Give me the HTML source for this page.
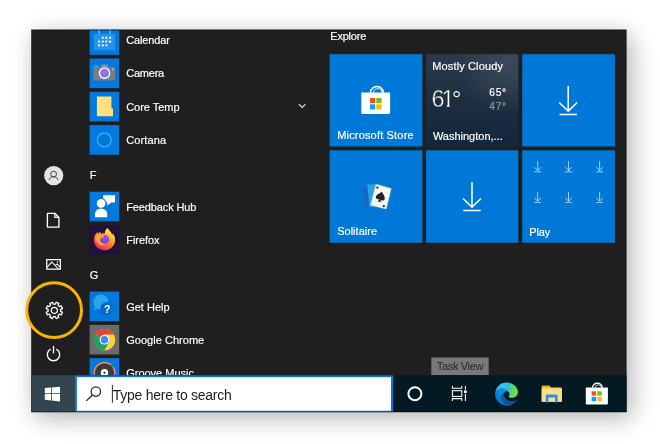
<!DOCTYPE html>
<html lang="en">
<head>
<meta charset="utf-8">
<title>Start menu - Settings</title>
<style>
html,body{margin:0;padding:0;background:#fff;}
body{width:660px;height:444px;overflow:hidden;position:relative;font-family:"Liberation Sans",sans-serif;}
#shadow{position:absolute;left:33px;top:31px;width:592px;height:379px;background:#1f1f1f;box-shadow:2px 4px 22px 1.5px rgba(0,0,0,0.24),9px 9px 26px 1.5px rgba(0,0,0,0.09);}
svg#ui{position:absolute;left:0;top:0;width:660px;height:444px;will-change:transform;}
svg text{font-family:"Liberation Sans",sans-serif;}
.lt{font-size:11px;fill:#fff;stroke:#fff;stroke-width:0.18px;}
</style>
</head>
<body>
<div id="shadow"></div>
<svg id="ui" width="660" height="444" viewBox="0 0 660 444">
<defs>
  <clipPath id="oneclip"><rect x="428" y="84" width="42" height="20.8"/><rect x="428" y="104" width="14.6" height="5"/><rect x="446.8" y="104" width="2.7" height="3.2"/></clipPath>
  <clipPath id="menuclip"><rect x="31.2" y="29.5" width="595.4" height="382.6"/></clipPath>
  <clipPath id="listclip"><rect x="31.2" y="29.5" width="595.4" height="345.7"/></clipPath>
  <linearGradient id="ghd" x1="0" y1="0" x2="1" y2="0.3"><stop offset="0" stop-color="#0a5fbc"/><stop offset="0.6" stop-color="#0a6ccb"/><stop offset="1" stop-color="#0975d3"/></linearGradient>
  <linearGradient id="camlens" x1="0" y1="0" x2="1" y2="1">
    <stop offset="0" stop-color="#d55fe0"/><stop offset="1" stop-color="#4a86f5"/>
  </linearGradient>
  <linearGradient id="wx" x1="0" y1="0" x2="0" y2="1">
    <stop offset="0" stop-color="#2a3a4b"/><stop offset="0.5" stop-color="#1e2e41"/><stop offset="1" stop-color="#13263a"/>
  </linearGradient>
  <radialGradient id="wxcloud" cx="0.9" cy="0.12" r="0.55">
    <stop offset="0" stop-color="#5a6675" stop-opacity="0.4"/><stop offset="1" stop-color="#5a6675" stop-opacity="0"/>
  </radialGradient>
  <g id="dl">
    <path d="M0 -14.3V10.6M-9 2.2L0 10.8L9 2.2M-8.7 14.2H8.7" fill="none" stroke="#fff" stroke-width="1.5"/>
  </g>
  <g id="dls">
    <path d="M0 -5V4.2M-3.3 1L0 4.3L3.3 1M-3.4 5.6H3.4" fill="none" stroke="#fff" stroke-opacity="0.72" stroke-width="0.9"/>
  </g>
</defs>

<!-- menu background -->
<rect x="31.2" y="29.5" width="595.4" height="382.6" fill="#1f1f1f"/>

<g clip-path="url(#listclip)">
<!-- ===== app list icon tiles ===== -->
<g id="apptiles">
  <rect x="89.6" y="25.2" width="29.6" height="29.6" fill="#0479dd"/>
  <rect x="89.6" y="58.5" width="29.6" height="29.6" fill="#0479dd"/>
  <rect x="89.6" y="91.8" width="29.6" height="29.6" fill="#0479dd"/>
  <rect x="89.6" y="125.1" width="29.6" height="29.6" fill="#0479dd"/>
  <rect x="89.6" y="191.7" width="29.6" height="29.6" fill="#0479dd"/>
  <rect x="89.6" y="225" width="29.6" height="29.6" fill="#20123a"/>
  <rect x="89.6" y="291.6" width="29.6" height="29.6" fill="#0479dd"/>
  <rect x="89.6" y="324.9" width="29.6" height="29.6" fill="#6b6b6b"/>
  <rect x="89.6" y="358.2" width="29.6" height="29.6" fill="#0479dd"/>
</g>

<!-- Calendar -->
<g>
  <rect x="98.2" y="28" width="1.7" height="6.3" fill="#4db4f8"/>
  <rect x="109.2" y="28" width="1.7" height="6.3" fill="#4db4f8"/>
  <rect x="93.8" y="33.8" width="21.3" height="16.4" fill="#2394ea"/>
  <g fill="#fff">
    <rect x="101.7" y="36.8" width="2" height="1.9"/><rect x="105.4" y="36.8" width="2" height="1.9"/><rect x="109.1" y="36.8" width="2" height="1.9"/>
    <rect x="98" y="40.6" width="2" height="1.9"/><rect x="101.7" y="40.6" width="2" height="1.9"/><rect x="105.4" y="40.6" width="2" height="1.9"/><rect x="109.1" y="40.6" width="2" height="1.9"/>
    <rect x="98" y="44.4" width="2" height="1.9"/><rect x="101.7" y="44.4" width="2" height="1.9"/><rect x="105.4" y="44.4" width="2" height="1.9"/>
  </g>
</g>
<!-- Camera -->
<g>
  <rect x="94.6" y="65.4" width="3.6" height="1.8" fill="#3fa9f5"/>
  <path d="M100.6 67.2L101.6 64.4H107.6L108.6 67.2Z" fill="#8b8f97"/>
  <rect x="93.2" y="66.9" width="21.8" height="13.6" rx="0.8" fill="#787d86"/>
  <circle cx="104.5" cy="73.1" r="5.9" fill="#fff"/>
  <circle cx="104.5" cy="73.1" r="4.5" fill="url(#camlens)"/>
  <circle cx="112.7" cy="69.4" r="0.75" fill="#e8e8e8"/>
</g>
<!-- Core Temp -->
<path d="M96.9 96.5H111.4V107.6L113 109.2V116.2H96.9Z" fill="#ffe07c"/>
<path d="M111.4 107.6L113 109.2H111.4Z" fill="#f3c64e"/>
<!-- Cortana -->
<circle cx="104.3" cy="139.8" r="6.9" fill="#0674d2" stroke="#1db2f8" stroke-width="1.5"/>
<!-- Feedback Hub -->
<g>
  <path d="M103.2 195.2H115V202.5H111.1L107.3 205.7V202.5H103.2Z" fill="#fff"/>
  <circle cx="101.1" cy="203.4" r="5.5" fill="#0479dd"/>
  <circle cx="101.1" cy="203.4" r="4.3" fill="#fff"/>
  <path d="M95 217.3V214A6.1 5.5 0 0 1 107.2 214V217.3Z" fill="#fff"/>
</g>
<!-- Firefox -->
<g>
  <defs>
    <linearGradient id="ffbody" x1="0.85" y1="0.1" x2="0.25" y2="1">
      <stop offset="0" stop-color="#fff44f"/><stop offset="0.25" stop-color="#ffc22e"/><stop offset="0.55" stop-color="#ff782a"/><stop offset="0.82" stop-color="#ff3d55"/><stop offset="1" stop-color="#f5236f"/>
    </linearGradient>
    <linearGradient id="ffglobe" x1="0.5" y1="0" x2="0.4" y2="1">
      <stop offset="0" stop-color="#b83df2"/><stop offset="1" stop-color="#5b4fe8"/>
    </linearGradient>
    <linearGradient id="fffox" x1="0" y1="0" x2="1" y2="1">
      <stop offset="0" stop-color="#ff9a2a"/><stop offset="1" stop-color="#ffb52e"/>
    </linearGradient>
  </defs>
  <path d="M107.3 228C105.6 229.4 104.6 231.6 104.9 233.6C103.4 233 101.9 233.4 100.9 234.2C100.5 233.3 100.5 232.5 100.7 231.8C99.6 232.2 98.8 233 98.3 233.8C97.9 233.2 97.8 232.6 97.9 232C95.3 233.6 93.8 236.6 93.9 240.1C94 245.8 98.7 250.2 104.5 250.2C110.4 250.2 115.1 245.6 115.1 239.9C115.1 236.6 113.7 234.3 112.5 233C112.7 234 112.6 234.8 112.4 235.4C111.6 232.4 109.4 230.4 107.3 228Z" fill="url(#ffbody)"/>
  <circle cx="104.7" cy="239.4" r="4.4" fill="url(#ffglobe)"/>
  <path d="M95.6 234.6C97.6 233.6 100.6 233.7 102.4 235.1C103.6 236 104.2 237 104.3 237.7C103 237.3 101.4 237.6 100.5 238.5C99.5 239.6 99.7 241.4 100.9 242.6C102.2 243.9 104.4 244.3 106.2 243.6C104.6 245.4 101.6 245.8 99.3 244.6C96.6 243.2 95.2 239.6 95.6 234.6Z" fill="url(#fffox)"/>
  </g>
<!-- Get Help -->
<g>
  <path d="M101 294.6A7.4 7.4 0 0 1 108.4 302A7.4 7.4 0 0 1 101 309.4C99.6 309.4 98.4 309.1 97.3 308.5L93.3 310.6L95 306.4A7.4 7.4 0 0 1 101 294.6Z" fill="#2ba6ea"/>
  <path d="M107.3 301.9A7.3 7.3 0 0 0 100 309.2A7.3 7.3 0 0 0 107.3 316.5C108.6 316.5 109.8 316.2 110.9 315.6L115.2 317.2L113.4 313.2A7.3 7.3 0 0 0 107.3 301.9Z" fill="url(#ghd)"/>
  <text x="107.3" y="313.3" font-size="10.5" font-weight="bold" fill="#fff" text-anchor="middle">?</text>
</g>
<!-- Chrome -->
<g transform="translate(104.5 339.7)">
  <circle r="10.6" fill="#fdd23f"/>
  <path d="M0 0L-9.18 -5.3A10.6 10.6 0 0 1 9.18 -5.3Z" fill="#e94335"/>
  <path d="M9.18 -5.3H0L0 0Z" fill="#e94335"/>
  <path d="M-9.18 -5.3A10.6 10.6 0 0 0 0 10.6L4.6 2.65L0 0Z" fill="#1fa463"/>
  <path d="M-9.18 -5.3L-4.6 2.65L0 5.3L0 10.6A10.6 10.6 0 0 1 -9.18 -5.3Z" fill="#1fa463"/>
  <path d="M0 10.6A10.6 10.6 0 0 0 9.18 -5.3H0L4.6 2.65Z" fill="#fdd23f"/>
  <circle r="4.9" fill="#fff"/>
  <circle r="3.8" fill="#4285f4"/>
</g>
<!-- Groove -->
<g>
  <defs><linearGradient id="grv" x1="0" y1="0" x2="1" y2="0"><stop offset="0" stop-color="#ff8a3c"/><stop offset="0.55" stop-color="#ff9c4a"/><stop offset="1" stop-color="#ff6f9c"/></linearGradient></defs>
  <circle cx="104.5" cy="372.8" r="10.9" fill="url(#grv)"/>
  <circle cx="104.5" cy="372.8" r="9.6" fill="#3b3b3b"/>
  <path d="M111 364.6L113.2 366.9" stroke="#2f7d32" stroke-width="1.6"/>
  <circle cx="104.5" cy="372.8" r="3.7" fill="#fff"/>
  <circle cx="104.5" cy="372.8" r="1" fill="#111"/>
</g>


<!-- ===== app list labels ===== -->
<g class="lt">
  <text x="126.2" y="44.1" textLength="43.8">Calendar</text>
  <text x="126.2" y="77.4" textLength="38">Camera</text>
  <text x="126.2" y="110.7" textLength="53.4">Core Temp</text>
  <text x="126.2" y="144" textLength="39.8">Cortana</text>
  <text x="89.7" y="178.8">F</text>
  <text x="126.2" y="210.6" textLength="70.2">Feedback Hub</text>
  <text x="126.2" y="243.9" textLength="33.4">Firefox</text>
  <text x="89.7" y="278.8">G</text>
  <text x="126.2" y="310.5" textLength="43.4">Get Help</text>
  <text x="126.2" y="343.8" textLength="78">Google Chrome</text>
  <text x="126.2" y="377.1" textLength="67.7">Groove Music</text>
</g>
<path d="M298.9 104.2L302.2 107.5L305.5 104.2" fill="none" stroke="#e2e2e2" stroke-width="1.1"/>
</g>

<!-- ===== left rail ===== -->
<!-- user avatar -->
<circle cx="53.7" cy="175.6" r="9.6" fill="#e4e4e4"/>
<circle cx="53.6" cy="174.1" r="2.9" fill="none" stroke="#454545" stroke-width="1"/>
<path d="M49.3 180.1A4.25 3.3 0 0 1 57.8 180.1" fill="none" stroke="#454545" stroke-width="1"/>
<!-- document -->
<path d="M47.4 213.3H54.8L58.9 217.4V227.1H47.4Z" fill="none" stroke="#fff" stroke-width="1.35" stroke-linejoin="round"/>
<path d="M54.8 213.3V217.4H58.9" fill="none" stroke="#fff" stroke-width="1.15"/>
<!-- pictures -->
<rect x="46.75" y="259.65" width="13.6" height="9.5" fill="none" stroke="#fff" stroke-width="1.25"/>
<path d="M47.2 267.2L51.7 262.1L58.6 269M55.2 265.6L57 263.9L60.2 267.1" fill="none" stroke="#fff" stroke-width="1.05"/>
<circle cx="57.6" cy="262" r="0.7" fill="#fff"/>
<!-- highlight ring -->
<circle cx="54.1" cy="310.1" r="27.4" fill="#1f1f1f" stroke="#fbb400" stroke-width="3"/>
<!-- gear -->
<g transform="translate(54.35 310.4)" fill="none" stroke="#fff" stroke-width="1.3" stroke-linejoin="round">
  <circle r="3.1"/>
  <path d="M6.23 0.96L8.14 1.84L7.06 4.45L5.08 3.73A6.30 6.30 0 0 1 3.73 5.08L4.45 7.06L1.84 8.14L0.96 6.23A6.30 6.30 0 0 1 -0.96 6.23L-1.84 8.14L-4.45 7.06L-3.73 5.08A6.30 6.30 0 0 1 -5.08 3.73L-7.06 4.45L-8.14 1.84L-6.23 0.96A6.30 6.30 0 0 1 -6.23 -0.96L-8.14 -1.84L-7.06 -4.45L-5.08 -3.73A6.30 6.30 0 0 1 -3.73 -5.08L-4.45 -7.06L-1.84 -8.14L-0.96 -6.23A6.30 6.30 0 0 1 0.96 -6.23L1.84 -8.14L4.45 -7.06L3.73 -5.08A6.30 6.30 0 0 1 5.08 -3.73L7.06 -4.45L8.14 -1.84L6.23 -0.96A6.30 6.30 0 0 1 6.23 0.96Z"/>
</g>
<!-- power -->
<path d="M50.6 349.1A6.2 6.2 0 1 0 56.4 349.1" fill="none" stroke="#fff" stroke-width="1.4"/>
<path d="M53.5 346V353.3" fill="none" stroke="#fff" stroke-width="1.35"/>


<!-- ===== tiles ===== -->
<text class="lt" x="330.3" y="39.8" textLength="36">Explore</text>
<g id="tiles">
  <rect x="329.6" y="54.2" width="92.8" height="92.3" fill="#0078d7"/>
  <rect x="426.1" y="54.2" width="92.2" height="92.3" fill="url(#wx)"/>
  <rect x="426.1" y="54.2" width="92.2" height="92.3" fill="url(#wxcloud)"/>
  <rect x="522.2" y="54.2" width="92.7" height="92.3" fill="#0078d7"/>
  <rect x="329.6" y="150.3" width="92.8" height="92.4" fill="#0078d7"/>
  <rect x="426.1" y="150.3" width="92.2" height="92.4" fill="#0078d7"/>
  <rect x="522.2" y="150.3" width="92.7" height="92.4" fill="#0078d7"/>
</g>
<!-- Store tile -->
<g>
  <path d="M370.4 92.8V92.6A6.5 6 0 0 1 383.4 92.6V92.8" fill="none" stroke="#fff" stroke-width="1.5"/>
  <path d="M373.6 92.8V92.6A4.2 3.9 0 0 1 382 92.6V92.8" fill="none" stroke="#d6e9fa" stroke-width="1"/>
  <path d="M361.3 92.4H390.1V112.4A1.5 1.5 0 0 1 388.6 113.9H362.8A1.5 1.5 0 0 1 361.3 112.4Z" fill="#fff"/>
  <rect x="370" y="98" width="5.2" height="5.2" fill="#f25022"/>
  <rect x="376.3" y="98" width="5.2" height="5.2" fill="#7fba00"/>
  <rect x="370" y="104.3" width="5.2" height="5.2" fill="#00a4ef"/>
  <rect x="376.3" y="104.3" width="5.2" height="5.2" fill="#ffb900"/>
  <text class="lt" x="337.2" y="139.4" textLength="76.4">Microsoft Store</text>
</g>
<!-- Weather tile -->
<g fill="#fff">
  <text class="lt" x="432.3" y="70.3" textLength="70.6">Mostly Cloudy</text>
  <text clip-path="url(#oneclip)" x="431.6" y="106.7" font-size="23.4" textLength="23" stroke="#213144" stroke-width="0.45">61</text>
  <text x="451.7" y="106.9" font-size="24.5" stroke="#213144" stroke-width="0.2">°</text>
  <text x="489.2" y="95.6" font-size="10.2" textLength="17" stroke="#fff" stroke-width="0.18">65°</text>
  <text x="489.2" y="110.3" font-size="10.2" textLength="17" fill="#8f989f" stroke="#8f989f" stroke-width="0.18">47°</text>
  <text class="lt" x="432.9" y="139.5" textLength="69.8">Washington,...</text>
</g>
<!-- download tiles -->
<use href="#dl" x="568.2" y="100.3"/>
<use href="#dl" x="472" y="196.3"/>
<!-- Solitaire -->
<g>
  <path d="M360.9 188.6L368 186.4L371.6 205.8L366.6 207.6Z" fill="#1369bd"/>
  <path d="M367.3 184.6L377 184.2L376.6 206.2L369.4 207Z" fill="#2d9fe3"/>
  <path d="M376 184.3L391.2 188.6L386.2 209L370.6 205.2Z" fill="#f6f6f4" stroke="#d9dde0" stroke-width="0.5" stroke-linejoin="round"/>
  <g transform="translate(380.6 196.8) rotate(14)">
    <path d="M0 -5.2C1.6 -3 4.6 -1.4 4.6 1.2C4.6 3 2.4 3.9 0.7 2.5C0.9 3.8 1.3 4.6 2 5.2H-2C-1.3 4.6 -0.9 3.8 -0.7 2.5C-2.4 3.9 -4.6 3 -4.6 1.2C-4.6 -1.4 -1.6 -3 0 -5.2Z" fill="#222"/>
  </g>
  <circle cx="377.4" cy="187.6" r="1.15" fill="#222"/>
  <circle cx="383.8" cy="206.1" r="1.15" fill="#222"/>
  <text class="lt" x="337.2" y="235.3" textLength="39.8">Solitaire</text>
</g>
<!-- Play tile -->
<g>
  <use href="#dls" x="537.7" y="166.2"/><use href="#dls" x="568.5" y="166.2"/><use href="#dls" x="599.6" y="166.2"/>
  <use href="#dls" x="537.7" y="196.8"/><use href="#dls" x="568.5" y="196.8"/><use href="#dls" x="599.6" y="196.8"/>
  <text class="lt" x="529.2" y="235.5" textLength="21">Play</text>
</g>


<!-- ===== taskbar ===== -->
<rect x="31.2" y="375.2" width="595.4" height="36.9" fill="#031a23"/>
<rect x="31.2" y="375.2" width="43.9" height="36.9" fill="#33454f"/>
<!-- windows logo -->
<g fill="#fff">
  <path d="M44.8 388L51 387.47V393.2H44.8Z"/>
  <path d="M51.8 387.4L60 386.7V393.2H51.8Z"/>
  <path d="M44.8 393.95H51V400.47L44.8 399.7Z"/>
  <path d="M51.8 393.95H60V401.6L51.8 400.57Z"/>
</g>
<!-- search box -->
<rect x="75" y="375.3" width="318.1" height="36.8" fill="#0878de"/>
<rect x="76.9" y="377.2" width="314.1" height="33.6" fill="#fff"/>
<circle cx="95.85" cy="391.6" r="4.7" fill="none" stroke="#222" stroke-width="1.25"/>
<path d="M92.5 395L86.3 400.9" stroke="#222" stroke-width="1.25"/>
<rect x="111.9" y="385" width="0.9" height="17.8" fill="#111"/>
<text x="112.8" y="399.9" font-size="14" fill="#1c1c1c" textLength="119">Type here to search</text>
<!-- tooltip -->
<rect x="431.3" y="357.5" width="57.4" height="17.5" fill="#787878"/>
<text x="436.8" y="369.8" font-size="11" fill="#262626" textLength="46.6">Task View</text>
<!-- cortana -->
<circle cx="414.9" cy="393.7" r="6.5" fill="none" stroke="#fff" stroke-width="2"/>
<!-- task view -->
<g fill="none" stroke="#fff" stroke-width="1.05">
  <rect x="452.4" y="390.7" width="9.4" height="5.7"/>
  <path d="M452.4 385.9V388.2H461.8V385.9"/>
  <path d="M452.4 400.9V398.6H461.8V400.9"/>
  <path d="M465.4 385.9V389.6M465.4 393.8V400.9"/>
</g>
<rect x="464.1" y="390.4" width="2.6" height="2.6" fill="#fff"/>
<g transform="translate(495.1 382.6) scale(0.0895)">
<defs>
<linearGradient id="ea" x1="63" y1="180" x2="241" y2="180" gradientUnits="userSpaceOnUse"><stop offset="0" stop-color="#0c59a4"/><stop offset="1" stop-color="#114a8b"/></linearGradient>
<linearGradient id="ec" x1="157" y1="100" x2="46" y2="221" gradientUnits="userSpaceOnUse"><stop offset="0" stop-color="#1b9de2"/><stop offset="0.16" stop-color="#1595df"/><stop offset="0.67" stop-color="#0680d7"/><stop offset="1" stop-color="#0078d4"/></linearGradient>
<radialGradient id="ee" cx="26" cy="47" r="205" gradientUnits="userSpaceOnUse"><stop offset="0" stop-color="#35c1f1"/><stop offset="0.3" stop-color="#36c2ee"/><stop offset="0.48" stop-color="#30c3e0"/><stop offset="0.6" stop-color="#2cc4d0"/><stop offset="0.95" stop-color="#66df4e"/></radialGradient>
</defs>
<path d="M235.7 195.5a93.7 93.7 0 0 1-10.6 4.700 101.900 101.900 0 0 1-35.900 6.400c-47.300 0-88.500-32.500-88.500-74.300a31.500 31.500 0 0 1 16.400-27.300c-42.800 1.800-53.800 46.400-53.800 72.500 0 74 68.100 81.400 82.800 81.400 7.900 0 19.800-2.300 27-4.600l1.300-.4a128.300 128.300 0 0 0 66.600-52.800 4 4 0 0 0-5.300-5.600z" fill="url(#ea)"/>
<path d="M105.700 241.400a79.200 79.200 0 0 1-22.700-21.300 80.700 80.700 0 0 1 29.500-120c3.200-1.500 8.500-4.100 15.600-4a32.400 32.400 0 0 1 25.700 13 31.900 31.900 0 0 1 6.300 18.700c0-.2 24.500-79.600-80-79.600-43.900 0-80 41.600-80 78.200a130.200 130.200 0 0 0 12.100 56 128 128 0 0 0 156.400 67 75.500 75.500 0 0 1-62.800-8z" fill="url(#ec)"/>
<path d="M152.300 148.900c-.9 1-3.400 2.500-3.400 5.600 0 2.600 1.700 5.200 4.800 7.300 14.300 10 41.400 8.600 41.500 8.600a59.600 59.600 0 0 0 30.300-8.300 61.400 61.400 0 0 0 30.400-52.900c.3-22.400-8-37.300-11.300-43.900C223.500 23.900 178 0 128 0A128 128 0 0 0 0 126.200c.5-36.500 36.800-66 80-66 3.500 0 23.500.3 42 10a72.600 72.600 0 0 1 30.900 29.300c6.100 10.600 7.200 24.100 7.200 29.500s-2.700 13.300-7.800 19.900z" fill="url(#ee)"/>
</g>
<!-- explorer -->
<g>
  <path d="M541.7 386.6A0.8 0.8 0 0 1 542.5 385.8H549.4L551 387.4H561A0.8 0.8 0 0 1 561.8 388.2V401.7H541.7Z" fill="#ffd25a"/>
  <path d="M541.7 387.4V386.6A0.8 0.8 0 0 1 542.5 385.8H549.4L550.2 386.6L549.4 387.4Z" fill="#f4a321"/>
  <path d="M541.7 389H561.8V401.7H541.7Z" fill="#ffdf85"/>
  <path d="M545.8 402.5V395.6A1 1 0 0 1 546.8 394.6H556.6A1 1 0 0 1 557.6 395.6V402.5H555V397.4H548.4V402.5Z" fill="#2c8df2"/>
</g>
<!-- store -->
<g>
  <path d="M592.6 387.8V387.6A4.8 4.4 0 0 1 602.2 387.6V387.8" fill="none" stroke="#fff" stroke-width="1.4"/>
  <path d="M595.2 387.8V387.6A3 2.7 0 0 1 601.2 387.6V387.8" fill="none" stroke="#cfd9de" stroke-width="0.9"/>
  <path d="M585.8 387.5H607.9V403.2A1.4 1.4 0 0 1 606.5 404.6H587.2A1.4 1.4 0 0 1 585.8 403.2Z" fill="#fff"/>
  <rect x="591.6" y="391.3" width="4.4" height="4.3" fill="#f25022"/>
  <rect x="597.3" y="391.3" width="4.4" height="4.3" fill="#7fba00"/>
  <rect x="591.6" y="396.9" width="4.4" height="4.3" fill="#00a4ef"/>
  <rect x="597.3" y="396.9" width="4.4" height="4.3" fill="#ffb900"/>
</g>


<rect x="31.2" y="411.2" width="595.4" height="0.9" fill="#000" fill-opacity="0.4"/>
<rect x="31.2" y="30" width="595.4" height="0.9" fill="#000" fill-opacity="0.3" clip-path="url(#listclip)"/>
</svg>
</body>
</html>
